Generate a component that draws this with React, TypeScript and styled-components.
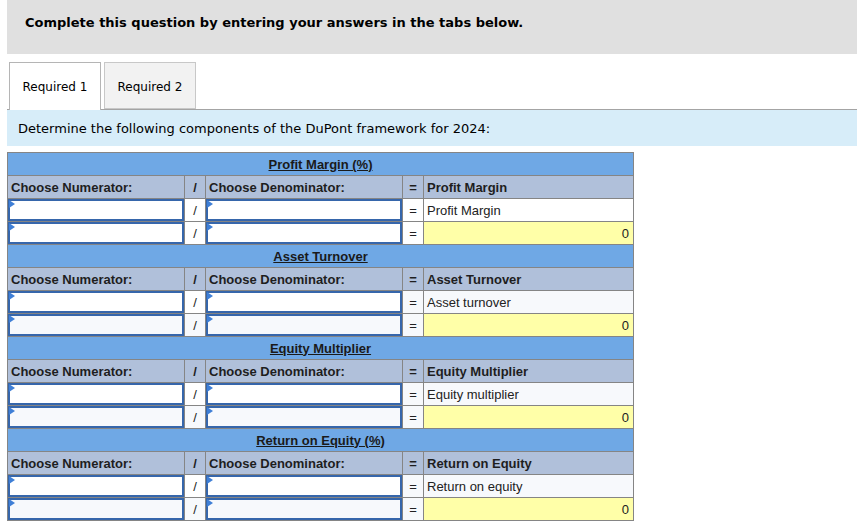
import { createGlobalStyle, styled } from "styled-components";

const GlobalStyle = createGlobalStyle`
  html, body {
    margin: 0;
    padding: 0;
    background: #ffffff;
  }
  body {
    font-family: "DejaVu Sans", Verdana, sans-serif;
    color: #000;
  }
`;

const Page = styled.div`
  width: 850px;
  padding-left: 7px;
`;

const Banner = styled.div`
  height: 54px;
  background: #e0e0e0;
  display: flex;
  align-items: center;
  padding: 0 18px;
  font-size: 13px;
  font-weight: bold;
  box-sizing: border-box;
  padding-bottom: 10px;
`;

const TabBar = styled.div`
  display: flex;
  gap: 3px;
  margin-top: 8px;
  padding-left: 2px;
  border-bottom: 1px solid #a4a4a4;
  height: 47px;
  box-sizing: content-box;
`;

const Tab = styled.div<{ $active?: boolean }>`
  width: 92px;
  height: ${(p) => (p.$active ? "48px" : "47px")};
  box-sizing: border-box;
  border: 1px solid ${(p) => (p.$active ? "#b5b5b5" : "#c8c8c8")};
  border-bottom: ${(p) => (p.$active ? "none" : "1px solid #c8c8c8")};
  background: ${(p) => (p.$active ? "#ffffff" : "#f2f2f2")};
  display: flex;
  align-items: center;
  justify-content: center;
  padding-top: ${(p) => (p.$active ? "0" : "2px")};
  font-size: 12px;
  position: relative;
  z-index: 1;
`;

const Instructions = styled.div`
  height: 36px;
  background: #d7edf9;
  display: flex;
  align-items: center;
  padding-left: 11px;
  font-size: 13px;
`;

const Table = styled.table`
  margin-top: 6px;
  border-collapse: collapse;
  table-layout: fixed;
  width: 626px;
  font-family: "Liberation Sans", Arial, sans-serif;
  font-size: 13px;
  color: #222;
  border: 1px solid #7d7d7d;

  tr {
    height: 23px;
  }
`;

const Cell = styled.td<{ $bg?: string; $align?: string }>`
  height: 23px;
  padding: 0 3px;
  border: 1px solid #858585;
  background: ${(p) => p.$bg || "#ffffff"};
  text-align: ${(p) => p.$align || "left"};
  white-space: nowrap;
  box-sizing: border-box;
`;

const TitleCell = styled.td`
  height: 23px;
  background: #6fa8e5;
  border: 1px solid #858585;
  text-align: center;
  font-weight: bold;
  color: #1a1a1a;
  text-decoration: underline;
  padding: 0;
  box-sizing: border-box;
`;

const HeadCell = styled(Cell)`
  background: #b0c0da;
  font-weight: bold;
  color: #1e1e1e;
`;

const InputCell = styled.td<{ $bg?: string }>`
  height: 23px;
  padding: 0;
  border: 1px solid #858585;
  background: ${(p) => p.$bg || "#ffffff"};
  box-sizing: border-box;
`;

const InputBox = styled.div`
  position: relative;
  height: 22px;
  box-sizing: border-box;
  border: 2px solid #3666ab;

  &::before {
    content: "";
    position: absolute;
    left: -1px;
    top: -1px;
    width: 0;
    height: 0;
    border-top: 4px solid transparent;
    border-bottom: 4px solid transparent;
    border-left: 6px solid #3f7fd6;
  }
`;

const Sign = styled(Cell)`
  text-align: center;
  padding: 0;
`;

const Result = styled(Cell)`
  background: #ffffa8;
  text-align: right;
  padding-right: 4px;
`;

type Block = {
  title: string;
  head: string;
  label: string;
  shade: boolean;
};

const blocks: Block[] = [
  { title: "Profit Margin (%)", head: "Profit Margin", label: "Profit Margin", shade: false },
  { title: "Asset Turnover", head: "Asset Turnover", label: "Asset turnover", shade: true },
  { title: "Equity Multiplier", head: "Equity Multiplier", label: "Equity multiplier", shade: true },
  { title: "Return on Equity (%)", head: "Return on Equity", label: "Return on equity", shade: true },
];

const App = () => {
  return (
    <Page>
      <GlobalStyle />
      <Banner>Complete this question by entering your answers in the tabs below.</Banner>
      <TabBar>
        <Tab $active>Required 1</Tab>
        <Tab>Required 2</Tab>
      </TabBar>
      <Instructions>Determine the following components of the DuPont framework for 2024:</Instructions>
      <Table>
        <colgroup>
          <col style={{ width: 177 }} />
          <col style={{ width: 21 }} />
          <col style={{ width: 197 }} />
          <col style={{ width: 21 }} />
          <col style={{ width: 210 }} />
        </colgroup>
        <tbody>
          {blocks.map((b) => {
            const alt = b.shade ? "#f7f9fc" : "#ffffff";
            return [
              <tr key={b.title + "t"}>
                <TitleCell colSpan={5}>{b.title}</TitleCell>
              </tr>,
              <tr key={b.title + "h"}>
                <HeadCell>Choose Numerator:</HeadCell>
                <HeadCell $align="center">/</HeadCell>
                <HeadCell>Choose Denominator:</HeadCell>
                <HeadCell $align="center">=</HeadCell>
                <HeadCell>{b.head}</HeadCell>
              </tr>,
              <tr key={b.title + "1"}>
                <InputCell>
                  <InputBox />
                </InputCell>
                <Sign>/</Sign>
                <InputCell>
                  <InputBox />
                </InputCell>
                <Sign $bg={alt}>=</Sign>
                <Cell $bg={alt}>{b.label}</Cell>
              </tr>,
              <tr key={b.title + "2"}>
                <InputCell $bg={alt}>
                  <InputBox />
                </InputCell>
                <Sign $bg={alt}>/</Sign>
                <InputCell $bg={alt}>
                  <InputBox />
                </InputCell>
                <Sign $bg={alt}>=</Sign>
                <Result>0</Result>
              </tr>,
            ];
          })}
        </tbody>
      </Table>
    </Page>
  );
};

export default App;
